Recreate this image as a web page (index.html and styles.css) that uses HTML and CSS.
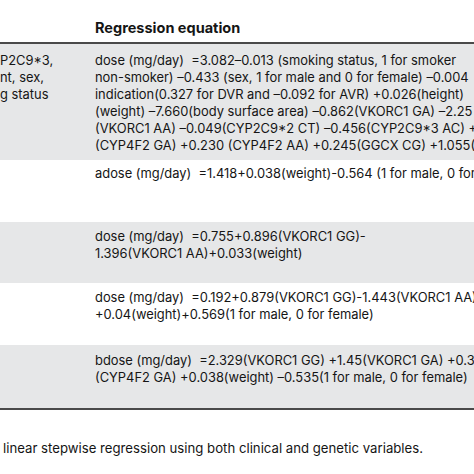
FILE: index.html
```html
<!DOCTYPE html>
<html>
<head>
<meta charset="utf-8">
<link rel="stylesheet" href="styles.css">
</head>
<body>
<div class="page">
  <div class="head">
    <div class="c1"></div>
    <div class="c2 title">Regression equation</div>
  </div>
  <div class="row grey r1">
    <div class="c1">
      <span class="ln">P2C9*3,</span>
      <span class="ln">nt, sex,</span>
      <span class="ln">g status</span>
    </div>
    <div class="c2">
      <span class="ln">dose (mg/day) &nbsp;=3.082–0.013 (smoking status, 1 for smoker</span>
      <span class="ln">non-smoker) –0.433 (sex, 1 for male and 0 for female) –0.004</span>
      <span class="ln">indication(0.327 for DVR and –0.092 for AVR) +0.026(height)</span>
      <span class="ln">(weight) –7.660(body surface area) –0.862(VKORC1 GA) –2.25</span>
      <span class="ln">(VKORC1 AA) –0.049(CYP2C9*2 CT) –0.456(CYP2C9*3 AC) +0.</span>
      <span class="ln">(CYP4F2 GA) +0.230 (CYP4F2 AA) +0.245(GGCX CG) +1.055(G</span>
    </div>
  </div>
  <div class="row r2">
    <div class="c1"></div>
    <div class="c2">
      <span class="ln">adose (mg/day) &nbsp;=1.418+0.038(weight)-0.564 (1 for male, 0 for</span>
    </div>
  </div>
  <div class="row grey r3">
    <div class="c1"></div>
    <div class="c2">
      <span class="ln">dose (mg/day) &nbsp;=0.755+0.896(VKORC1 GG)-</span>
      <span class="ln">1.396(VKORC1 AA)+0.033(weight)</span>
    </div>
  </div>
  <div class="row r4">
    <div class="c1"></div>
    <div class="c2">
      <span class="ln">dose (mg/day) &nbsp;=0.192+0.879(VKORC1 GG)-1.443(VKORC1 AA)</span>
      <span class="ln">+0.04(weight)+0.569(1 for male, 0 for female)</span>
    </div>
  </div>
  <div class="row grey r5">
    <div class="c1"></div>
    <div class="c2">
      <span class="ln">bdose (mg/day) &nbsp;=2.329(VKORC1 GG) +1.45(VKORC1 GA) +0.3</span>
      <span class="ln">(CYP4F2 GA) +0.038(weight) –0.535(1 for male, 0 for female)</span>
    </div>
  </div>
  <p class="caption">linear stepwise regression using both clinical and genetic variables.</p>
</div>
</body>
</html>
```
FILE: styles.css
```css
html, body {
  margin: 0;
  padding: 0;
  background: #ffffff;
}
body {
  width: 474px;
  height: 474px;
  overflow: hidden;
  font-family: Inter, Lato, "Liberation Sans", sans-serif;
  font-size: 12.9px;
  color: #151515;
}
.page {
  width: 474px;
  overflow: hidden;
}
.head, .row {
  display: grid;
  grid-template-columns: 95px 1fr;
}
.head {
  height: 42px;
  align-items: end;
  border-bottom: 2px solid #4a4a4a;
}
.title {
  font-weight: 700;
  font-size: 14.5px;
  padding-bottom: 6px;
  line-height: 17px;
}
.row {
  box-sizing: border-box;
  line-height: 17px;
}
.grey {
  background: #e6e7e8;
}
.r1 { height: 116px; padding-top: 8px; }
.r2 { height: 62px; padding-top: 5px; }
.r3 { height: 61px; padding-top: 6px; }
.r4 { height: 62px; padding-top: 6px; }
.r5 { height: 65px; padding-top: 7px; border-bottom: 2px solid #4a4a4a; }
.c1, .c2 {
  display: flex;
  flex-direction: column;
  white-space: nowrap;
  overflow: hidden;
}
.ln {
  display: block;
}
.caption {
  margin: 29px 0 0 3px;
  font-size: 13.2px;
  line-height: 18px;
  white-space: nowrap;
}
```
